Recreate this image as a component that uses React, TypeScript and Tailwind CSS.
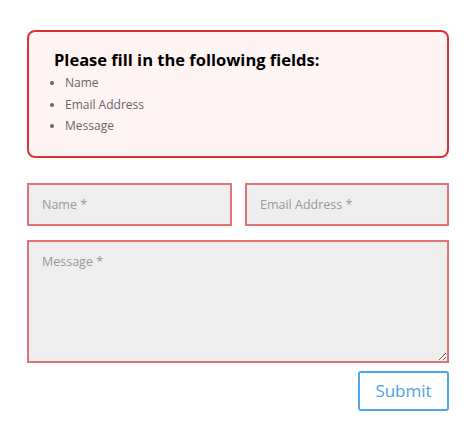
import React from "react";

export default function App() {
  return (
    <div className="w-[474px] h-[439px] bg-white" style={{ fontFamily: '"Open Sans", sans-serif' }}>
      <div className="ml-[27px] w-[422px] pt-[30px]">
        <div className="border-2 border-[#dc3232] rounded-[8px] bg-[#fff4f4] pl-[25px] pt-[18px] pb-[19px]">
          <p className="text-[16.5px] leading-[19px] font-bold text-black">Please fill in the following fields:</p>
          <ul className="list-disc pl-[11px] mt-[3px] text-[12px] leading-[21.5px] text-[#666] marker:text-[#666]">
            <li>Name</li>
            <li>Email Address</li>
            <li>Message</li>
          </ul>
        </div>
        <form className="mt-[25px] flex flex-col" onSubmit={(e) => e.preventDefault()}>
          <div className="flex gap-[13px]">
            <input
              className="w-[205px] h-[43px] bg-[#eee] border-2 border-[#e57272] px-[13px] text-[12.5px] text-[#999] placeholder:text-[#999] outline-none"
              placeholder="Name *"
            />
            <input
              className="w-[204px] h-[43px] bg-[#eee] border-2 border-[#e57272] px-[13px] text-[12.5px] text-[#999] placeholder:text-[#999] outline-none"
              placeholder="Email Address *"
            />
          </div>
          <textarea
            className="mt-[14px] w-[422px] h-[123px] bg-[#eee] border-2 border-[#e57272] px-[13px] pt-[11px] pb-[13px] text-[12.5px] leading-[18px] text-[#999] placeholder:text-[#999] outline-none block"
            placeholder="Message *"
          />
          <div className="flex justify-end mt-[8px]">
            <button
              type="submit"
              className="w-[91px] h-[40px] border-2 border-[#4aa8ec] rounded-[3px] text-[17px] text-[#4aa3e8] bg-white"
            >
              Submit
            </button>
          </div>
        </form>
      </div>
    </div>
  );
}
